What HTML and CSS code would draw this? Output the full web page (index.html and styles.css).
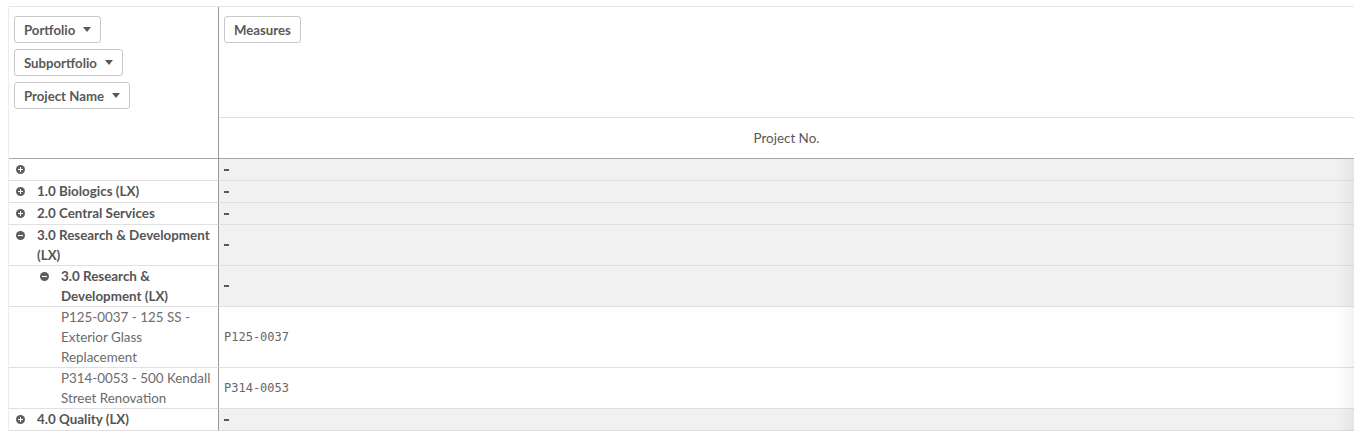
FILE: index.html
```html
<!DOCTYPE html>
<html>
<head>
<meta charset="utf-8">
<link rel="stylesheet" href="styles.css">
</head>
<body>
<div class="table">
  <div class="head-left">
    <button class="chip">Portfolio <span class="caret"></span></button>
    <button class="chip">Subportfolio <span class="caret"></span></button>
    <button class="chip">Project Name <span class="caret"></span></button>
  </div>
  <div class="head-right">
    <div class="head-top"><button class="chip">Measures</button></div>
    <div class="head-measure">Project No.</div>
  </div>

  <div class="dim lvl1"><span class="ico plus"></span><span class="lbl"></span></div>
  <div class="val grey"><span class="dash"></span></div>

  <div class="dim lvl1"><span class="ico plus"></span><span class="lbl">1.0 Biologics (LX)</span></div>
  <div class="val grey"><span class="dash"></span></div>

  <div class="dim lvl1"><span class="ico plus"></span><span class="lbl">2.0 Central Services</span></div>
  <div class="val grey"><span class="dash"></span></div>

  <div class="dim lvl1"><span class="ico minus"></span><span class="lbl">3.0 Research &amp; Development (LX)</span></div>
  <div class="val grey"><span class="dash"></span></div>

  <div class="dim lvl2"><span class="ico minus"></span><span class="lbl">3.0 Research &amp; Development (LX)</span></div>
  <div class="val grey"><span class="dash"></span></div>

  <div class="dim leaf"><span class="lbl">P125-0037 - 125 SS - Exterior Glass Replacement</span></div>
  <div class="val"><span class="num">P125-0037</span></div>

  <div class="dim leaf"><span class="lbl">P314-0053 - 500 Kendall Street Renovation</span></div>
  <div class="val"><span class="num">P314-0053</span></div>

  <div class="dim lvl1"><span class="ico plus"></span><span class="lbl">4.0 Quality (LX)</span></div>
  <div class="val grey"><span class="dash"></span></div>
  <div class="shade"></div>
</div>
</body>
</html>
```
FILE: styles.css
```css
* { box-sizing: border-box; }
body {
  margin: 0;
  padding: 6px 7px 0 8px;
  background: #fff;
  font-family: Lato, "Open Sans", sans-serif;
  color: #595959;
}
.table {
  position: relative;
  display: grid;
  grid-template-columns: 210px 1fr;
  border-top: 1px solid #e6e6e6;
  border-left: 1px solid #ececec;
}
.head-left {
  border-right: 1px solid #999;
  border-bottom: 1px solid #a6a6a6;
  padding: 9px 0 0 5px;
  display: flex;
  flex-direction: column;
  align-items: flex-start;
  gap: 6px;
  height: 152px;
}
.head-right {
  border-bottom: 1px solid #a6a6a6;
  display: flex;
  flex-direction: column;
}
.head-top {
  height: 111px;
  border-bottom: 1px solid #e0e0e0;
  padding: 9px 0 0 5px;
}
.head-measure {
  flex: 1;
  display: flex;
  align-items: center;
  justify-content: center;
  font-size: 13.4px;
  color: #595959;
  padding-left: 0;
}
.chip {
  height: 27px;
  border: 1px solid #c8c8c8;
  border-radius: 3px;
  background: #fff;
  font-family: Lato, "Open Sans", sans-serif;
  font-weight: bold;
  font-size: 13.2px;
  color: #595959;
  padding: 0 9px;
  display: inline-flex;
  align-items: center;
  gap: 8px;
  cursor: pointer;
}
.caret {
  width: 0; height: 0;
  border-left: 4px solid transparent;
  border-right: 4px solid transparent;
  border-top: 5px solid #595959;
}
.dim {
  border-right: 1px solid #999;
  border-bottom: 1px solid #e0e0e0;
  min-height: 22px;
  display: flex;
  align-items: flex-start;
  font-size: 13.4px;
  line-height: 20px;
  font-weight: bold;
  color: #555;
  background: #fff;
}
.dim .lbl { padding-right: 6px; }
.lvl1 { padding-left: 7px; }
.lvl2 { padding-left: 31px; }
.leaf { padding-left: 52px; font-weight: normal; color: #6b6b6b; }
.ico {
  flex: none;
  position: relative;
  width: 9px; height: 9px;
  border-radius: 50%;
  background: #5e5e5e;
  margin: 6px 12px 0 0;
}
.ico::before {
  content: "";
  position: absolute;
  left: 2px; top: 4px;
  width: 5px; height: 1px;
  background: #fff;
}
.plus::after {
  content: "";
  position: absolute;
  left: 4px; top: 2px;
  width: 1px; height: 5px;
  background: #fff;
}
.val {
  border-bottom: 1px solid #e0e0e0;
  display: flex;
  align-items: center;
  padding-left: 5px;
  background: #fff;
}
.val.grey { background: #f1f1f1; }
.dash {
  display: block;
  width: 5px;
  height: 2px;
  background: #5a5a5a;
}
.num {
  font-family: "DejaVu Sans Mono", "Liberation Mono", monospace;
  font-size: 12px;
  color: #666;
}
.shade {
  position: absolute;
  right: 0; top: 152px; bottom: 0;
  width: 18px;
  background: linear-gradient(to right, rgba(0,0,0,0), rgba(0,0,0,0.05));
  pointer-events: none;
}
```
